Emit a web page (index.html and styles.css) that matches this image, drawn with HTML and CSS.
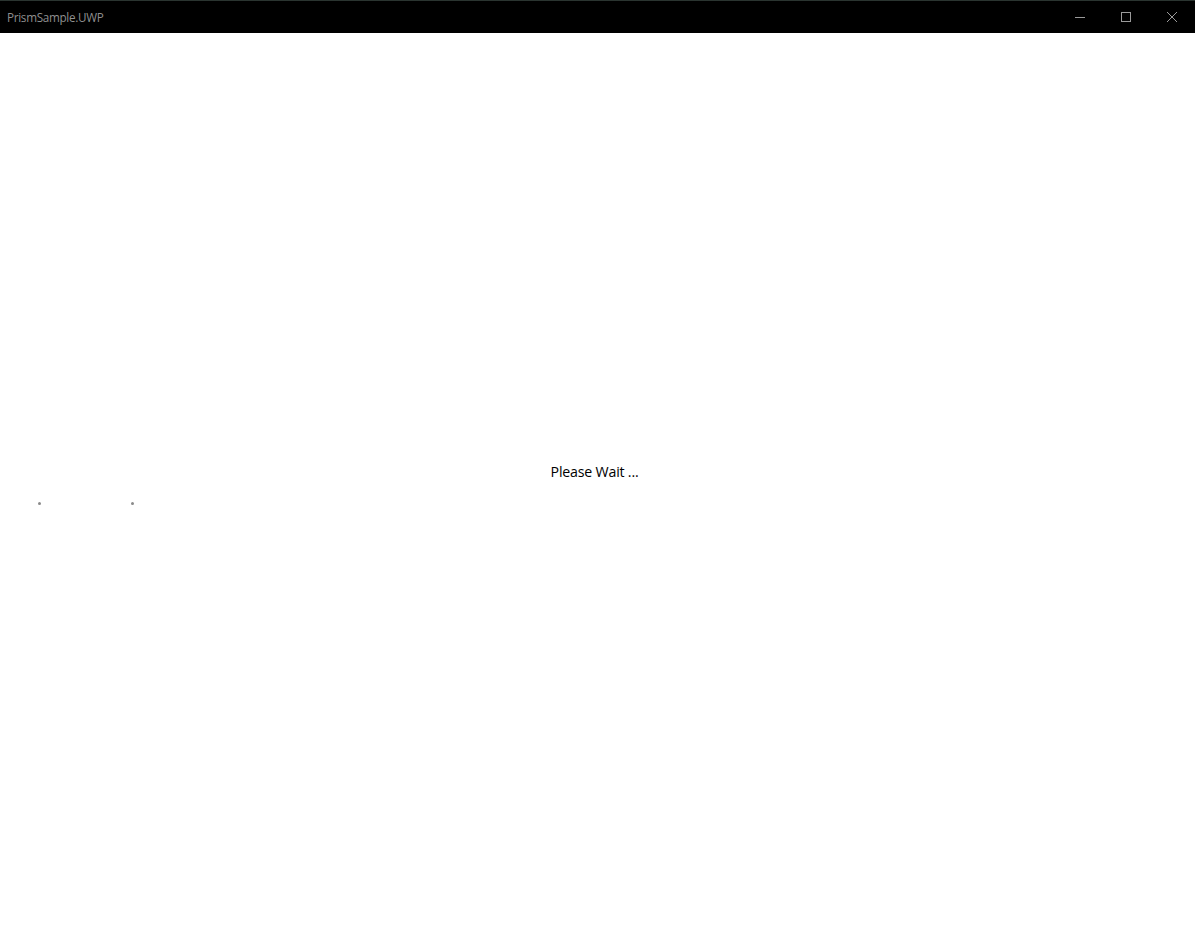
FILE: index.html
```html
<!DOCTYPE html>
<html>
<head>
<meta charset="utf-8">
<link rel="stylesheet" href="styles.css">
</head>
<body>
<div class="titlebar">
  <div class="title">PrismSample.UWP</div>
  <div class="controls">
    <div class="btn"><svg width="12" height="12" viewBox="0 0 12 12"><line x1="1" y1="6.5" x2="11" y2="6.5" stroke="#9a9a9a" stroke-width="1"/></svg></div>
    <div class="btn"><svg width="12" height="12" viewBox="0 0 12 12"><rect x="1.5" y="1.5" width="9" height="9" fill="none" stroke="#9a9a9a" stroke-width="1"/></svg></div>
    <div class="btn"><svg width="12" height="12" viewBox="0 0 12 12"><path d="M1 1L11 11M11 1L1 11" stroke="#9a9a9a" stroke-width="1"/></svg></div>
  </div>
</div>
<main class="content">
  <div class="wait">Please Wait ...</div>
  <div class="dots"><span class="dot"></span><span class="dot second"></span></div>
</main>
</body>
</html>
```
FILE: styles.css
```css
html, body { margin: 0; padding: 0; }
body { background: #fff; width: 1195px; height: 927px; overflow: hidden; font-family: "Open Sans", "Noto Sans", sans-serif; }
.titlebar {
  height: 33px;
  background: #000;
  display: flex;
  align-items: center;
  justify-content: space-between;
  box-sizing: border-box;
  border-top: 1px solid #2a3430;
}
.title { color: #8f8f8f; font-size: 11.7px; padding-left: 7px; margin-top: -1px; letter-spacing: -0.3px; }
.controls { display: flex; height: 100%; }
.btn { width: 46px; display: flex; align-items: center; justify-content: center; }
.content { position: relative; height: 894px; }
.wait { position: absolute; top: 429px; left: 0; right: 0; text-align: center; font-size: 14.2px; color: #000; letter-spacing: -0.2px; padding-right: 6px; }
.dots { position: absolute; top: 469px; left: 38px; display: flex; gap: 90px; }
.dot { width: 3px; height: 3px; border-radius: 50%; background: #8a8a8a; }
```
